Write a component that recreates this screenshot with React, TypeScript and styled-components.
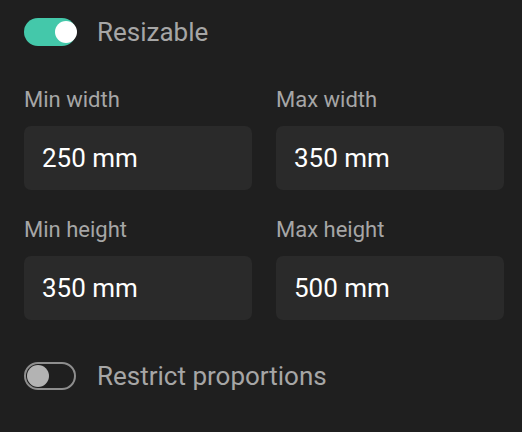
import React, { useState } from "react";
import styled, { createGlobalStyle } from "styled-components";

const Global = createGlobalStyle`
  html, body { margin: 0; padding: 0; background: #1f1f1f; }
  body { font-family: Roboto, "Noto Sans", "Liberation Sans", sans-serif; }
`;

const Panel = styled.div`
  width: 522px;
  height: 432px;
  box-sizing: border-box;
  padding: 18px 18px 0 24px;
  background: #1f1f1f;
  display: flex;
  flex-direction: column;
`;

const ToggleRow = styled.label<{ $mt?: number }>`
  display: flex;
  align-items: center;
  gap: 21px;
  height: 28px;
  margin-top: ${(p) => p.$mt ?? 0}px;
  cursor: pointer;
`;

const Track = styled.span<{ $on: boolean }>`
  position: relative;
  width: 52px;
  height: 28px;
  box-sizing: border-box;
  border-radius: 14px;
  background: ${(p) => (p.$on ? "#44c8aa" : "transparent")};
  border: ${(p) => (p.$on ? "none" : "2px solid #8e8e8e")};
  flex-shrink: 0;
`;

const Knob = styled.span<{ $on: boolean }>`
  position: absolute;
  top: ${(p) => (p.$on ? 3 : 1)}px;
  left: ${(p) => (p.$on ? 31 : 1)}px;
  width: 22px;
  height: 22px;
  border-radius: 50%;
  background: ${(p) => (p.$on ? "#ffffff" : "#b3b3b3")};
`;

const ToggleText = styled.span`
  font-size: 26px;
  color: #a6a6a6;
  line-height: 28px;
`;

const Grid = styled.div`
  display: grid;
  grid-template-columns: 228px 228px;
  column-gap: 24px;
  row-gap: 28px;
  margin-top: 42px;
`;

const Field = styled.div`
  display: flex;
  flex-direction: column;
  gap: 14px;
`;

const Label = styled.div`
  font-size: 22px;
  line-height: 24px;
  color: #a6a6a6;
`;

const InputBox = styled.div`
  height: 64px;
  box-sizing: border-box;
  border-radius: 7px;
  background: #2a2a2a;
  display: flex;
  align-items: center;
  padding-left: 18px;
  font-size: 26px;
  color: #ffffff;
`;

function Toggle({ on, text, mt, onClick }: { on: boolean; text: string; mt?: number; onClick: () => void }) {
  return (
    <ToggleRow $mt={mt} onClick={onClick}>
      <Track $on={on}>
        <Knob $on={on} />
      </Track>
      <ToggleText>{text}</ToggleText>
    </ToggleRow>
  );
}

const fields = [
  { label: "Min width", value: "250 mm" },
  { label: "Max width", value: "350 mm" },
  { label: "Min height", value: "350 mm" },
  { label: "Max height", value: "500 mm" },
];

export default function App() {
  const [resizable, setResizable] = useState(true);
  const [restrict, setRestrict] = useState(false);
  return (
    <>
      <Global />
      <Panel>
        <Toggle on={resizable} text="Resizable" onClick={() => setResizable(!resizable)} />
        <Grid>
          {fields.map((f) => (
            <Field key={f.label}>
              <Label>{f.label}</Label>
              <InputBox>{f.value}</InputBox>
            </Field>
          ))}
        </Grid>
        <Toggle on={restrict} text="Restrict proportions" mt={42} onClick={() => setRestrict(!restrict)} />
      </Panel>
    </>
  );
}
